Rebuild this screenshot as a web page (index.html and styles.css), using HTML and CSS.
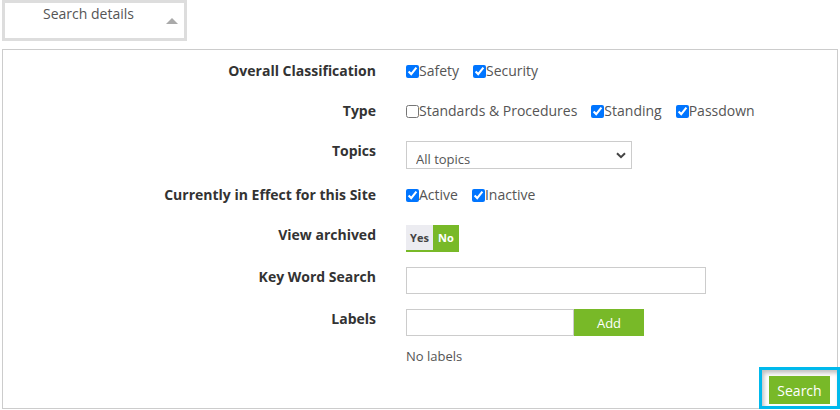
FILE: index.html
```html
<!DOCTYPE html>
<html lang="en">
<head>
<meta charset="utf-8">
<title>Search details</title>
<link rel="stylesheet" href="styles.css">
</head>
<body>
<div class="tab">
  <span class="tab-title">Search details</span>
  <span class="tab-caret"></span>
</div>
<div class="panel">
  <div class="row row-gap20">
    <div class="label">Overall Classification</div>
    <div class="controls">
      <label class="check"><input type="checkbox" checked>Safety</label>
      <label class="check"><input type="checkbox" checked>Security</label>
    </div>
  </div>
  <div class="row row-gap20">
    <div class="label">Type</div>
    <div class="controls">
      <label class="check"><input type="checkbox">Standards &amp; Procedures</label>
      <label class="check"><input type="checkbox" checked>Standing</label>
      <label class="check"><input type="checkbox" checked>Passdown</label>
    </div>
  </div>
  <div class="row row-gap16">
    <div class="label">Topics</div>
    <div class="controls">
      <select class="select"><option>All topics</option></select>
    </div>
  </div>
  <div class="row row-gap20">
    <div class="label">Currently in Effect for this Site</div>
    <div class="controls">
      <label class="check"><input type="checkbox" checked>Active</label>
      <label class="check"><input type="checkbox" checked>Inactive</label>
    </div>
  </div>
  <div class="row row-gap15">
    <div class="label">View archived</div>
    <div class="controls">
      <div class="toggle"><span class="toggle-yes">Yes</span><span class="toggle-no">No</span></div>
    </div>
  </div>
  <div class="row row-gap15">
    <div class="label">Key Word Search</div>
    <div class="controls">
      <input type="text" class="text-input keyword">
    </div>
  </div>
  <div class="row">
    <div class="label">Labels</div>
    <div class="controls column">
      <div class="input-group">
        <input type="text" class="text-input labels-input">
        <button class="btn add-btn">Add</button>
      </div>
      <div class="no-labels">No labels</div>
    </div>
  </div>
  <div class="actions">
    <div class="highlight">
      <button class="btn search-btn">Search</button>
    </div>
  </div>
</div>
</body>
</html>
```

FILE: styles.css
```css
* { box-sizing: border-box; }

body {
  margin: 0;
  font-family: "Open Sans", "Noto Sans", sans-serif;
  color: #555;
  background: #fff;
}

.tab {
  margin-left: 2px;
  width: 185px;
  height: 41px;
  border: 3px solid #ddd;
  display: flex;
  padding: 2px 6px 0 38px;
}

.tab-title {
  font-size: 14px;
  line-height: 18px;
  color: #555;
}

.tab-caret {
  margin-left: auto;
  align-self: flex-end;
  margin-bottom: 14px;
  width: 0;
  height: 0;
  border-left: 6px solid transparent;
  border-right: 6px solid transparent;
  border-bottom: 6px solid #aaa;
}

.panel {
  margin: 8px 2px 0 2px;
  border: 1px solid #ccc;
  padding: 11px 0 0 0;
  height: 360px;
}

.row {
  display: grid;
  grid-template-columns: 373px 1fr;
  column-gap: 30px;
}

.row-gap20 { margin-bottom: 20px; }
.row-gap16 { margin-bottom: 16px; }
.row-gap15 { margin-bottom: 15px; }

.label {
  text-align: right;
  font-weight: 700;
  font-size: 14px;
  line-height: 20px;
  color: #333;
}

.controls {
  display: flex;
  align-items: flex-start;
  font-size: 14px;
  line-height: 20px;
}

.controls.column {
  flex-direction: column;
}

.check {
  display: inline-flex;
  align-items: center;
  margin-right: 14px;
  color: #555;
}

.check input {
  margin: 0;
  width: 13px;
  height: 13px;
}

.select {
  appearance: none;
  -webkit-appearance: none;
  width: 226px;
  height: 28px;
  border: 1px solid #ccc;
  border-radius: 0;
  background: #fff url("data:image/svg+xml;utf8,<svg xmlns='http://www.w3.org/2000/svg' width='10' height='7' viewBox='0 0 10 7'><path d='M1 1.2 L5 5.2 L9 1.2' fill='none' stroke='%23444' stroke-width='2'/></svg>") no-repeat right 5px center;
  padding: 8px 0 0 9px;
  font-family: inherit;
  font-size: 13px;
  line-height: 18px;
  color: #555;
}

.toggle {
  display: flex;
  height: 27px;
  border-bottom: 2px solid #78b928;
  font-size: 11px;
  font-weight: 700;
}

.toggle-yes,
.toggle-no {
  display: flex;
  align-items: center;
  justify-content: center;
}

.toggle-yes {
  width: 27px;
  background: #ececf1;
  color: #444;
}

.toggle-no {
  width: 26px;
  background: #78b928;
  color: #fff;
}

.text-input {
  border: 1px solid #ccc;
  border-radius: 0;
  height: 27px;
  padding: 0 6px;
  font-family: inherit;
  font-size: 13px;
  background: #fff;
}

.keyword { width: 300px; }

.input-group {
  display: flex;
}

.labels-input { width: 168px; }

.btn {
  border: none;
  border-radius: 0;
  background: #78b928;
  color: #fff;
  font-family: inherit;
  font-size: 13px;
  padding: 0;
  cursor: pointer;
}

.add-btn {
  width: 70px;
  height: 27px;
}

.no-labels {
  margin-top: 10px;
  font-size: 13px;
  line-height: 20px;
  color: #555;
}

.actions {
  display: flex;
  justify-content: flex-end;
  margin-top: 1px;
  margin-right: -3px;
}

.highlight {
  border: 3px solid #00b9ec;
  padding: 6px 7px 2px 7px;
  background: #fff;
  box-shadow: inset 2px 3px 4px rgba(0, 0, 0, 0.25);
}

.search-btn {
  display: block;
  width: 61px;
  height: 28px;
  font-size: 14px;
}
```
